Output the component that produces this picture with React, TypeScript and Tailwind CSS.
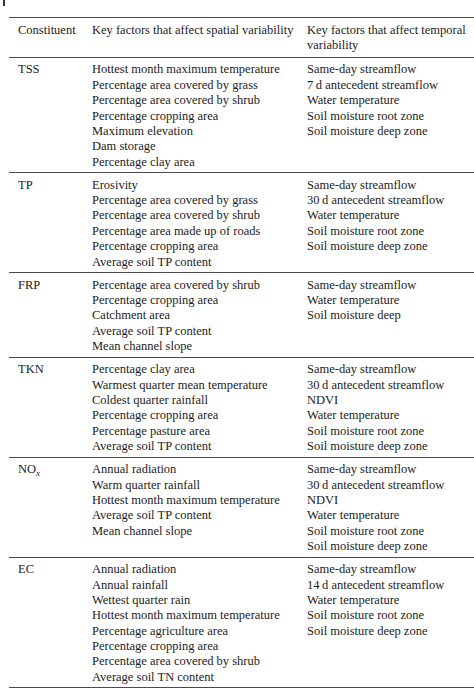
const sections = [
  {
    name: "TSS",
    spatial: [
      "Hottest month maximum temperature",
      "Percentage area covered by grass",
      "Percentage area covered by shrub",
      "Percentage cropping area",
      "Maximum elevation",
      "Dam storage",
      "Percentage clay area",
    ],
    temporal: [
      "Same-day streamflow",
      "7\u2009d antecedent streamflow",
      "Water temperature",
      "Soil moisture root zone",
      "Soil moisture deep zone",
    ],
  },
  {
    name: "TP",
    spatial: [
      "Erosivity",
      "Percentage area covered by grass",
      "Percentage area covered by shrub",
      "Percentage area made up of roads",
      "Percentage cropping area",
      "Average soil TP content",
    ],
    temporal: [
      "Same-day streamflow",
      "30\u2009d antecedent streamflow",
      "Water temperature",
      "Soil moisture root zone",
      "Soil moisture deep zone",
    ],
  },
  {
    name: "FRP",
    spatial: [
      "Percentage area covered by shrub",
      "Percentage cropping area",
      "Catchment area",
      "Average soil TP content",
      "Mean channel slope",
    ],
    temporal: ["Same-day streamflow", "Water temperature", "Soil moisture deep"],
  },
  {
    name: "TKN",
    spatial: [
      "Percentage clay area",
      "Warmest quarter mean temperature",
      "Coldest quarter rainfall",
      "Percentage cropping area",
      "Percentage pasture area",
      "Average soil TP content",
    ],
    temporal: [
      "Same-day streamflow",
      "30\u2009d antecedent streamflow",
      "NDVI",
      "Water temperature",
      "Soil moisture root zone",
      "Soil moisture deep zone",
    ],
  },
  {
    name: "NOX",
    spatial: [
      "Annual radiation",
      "Warm quarter rainfall",
      "Hottest month maximum temperature",
      "Average soil TP content",
      "Mean channel slope",
    ],
    temporal: [
      "Same-day streamflow",
      "30\u2009d antecedent streamflow",
      "NDVI",
      "Water temperature",
      "Soil moisture root zone",
      "Soil moisture deep zone",
    ],
  },
  {
    name: "EC",
    spatial: [
      "Annual radiation",
      "Annual rainfall",
      "Wettest quarter rain",
      "Hottest month maximum temperature",
      "Percentage agriculture area",
      "Percentage cropping area",
      "Percentage area covered by shrub",
      "Average soil TN content",
    ],
    temporal: [
      "Same-day streamflow",
      "14\u2009d antecedent streamflow",
      "Water temperature",
      "Soil moisture root zone",
      "Soil moisture deep zone",
    ],
  },
];

const grid = "grid grid-cols-[74px_215px_1fr]";
const cell = "pl-[9px] whitespace-nowrap";

export default function App() {
  return (
    <div
      className="min-h-screen bg-white text-[#1c1c1c] text-[12.5px] leading-[15.35px]"
      style={{ fontFamily: '"Liberation Serif", "Times New Roman", serif' }}
    >
      {/* clipped glyph from the line above */}
      <div className="h-[17px] pl-[3px]">
        <span className="block w-[2px] h-[6px] bg-[#333]" />
      </div>

      <div className="ml-[9px] border-t border-[#4a4a4a]">
        {/* Header */}
        <div className={`${grid} pt-[5px] pb-[3.3px] border-b border-[#4a4a4a]`}>
          <div className={cell}>Constituent</div>
          <div className={cell}>Key factors that affect spatial variability</div>
          <div className={cell}>
            Key factors that affect temporal
            <br />
            variability
          </div>
        </div>

        {sections.map((s, i) => (
          <div
            key={i}
            className={`${grid} pt-[4.5px] pb-[2.4px] border-b border-[#4a4a4a]`}
          >
            <div className={cell}>
              {s.name === "NOX" ? (
                <>
                  NO
                  <sub className="italic text-[9px] align-baseline relative top-[3px]">
                    x
                  </sub>
                </>
              ) : (
                s.name
              )}
            </div>
            <div className={cell}>
              {s.spatial.map((t, j) => (
                <div key={j}>{t}</div>
              ))}
            </div>
            <div className={cell}>
              {s.temporal.map((t, j) => (
                <div key={j}>{t}</div>
              ))}
            </div>
          </div>
        ))}
      </div>
    </div>
  );
}
